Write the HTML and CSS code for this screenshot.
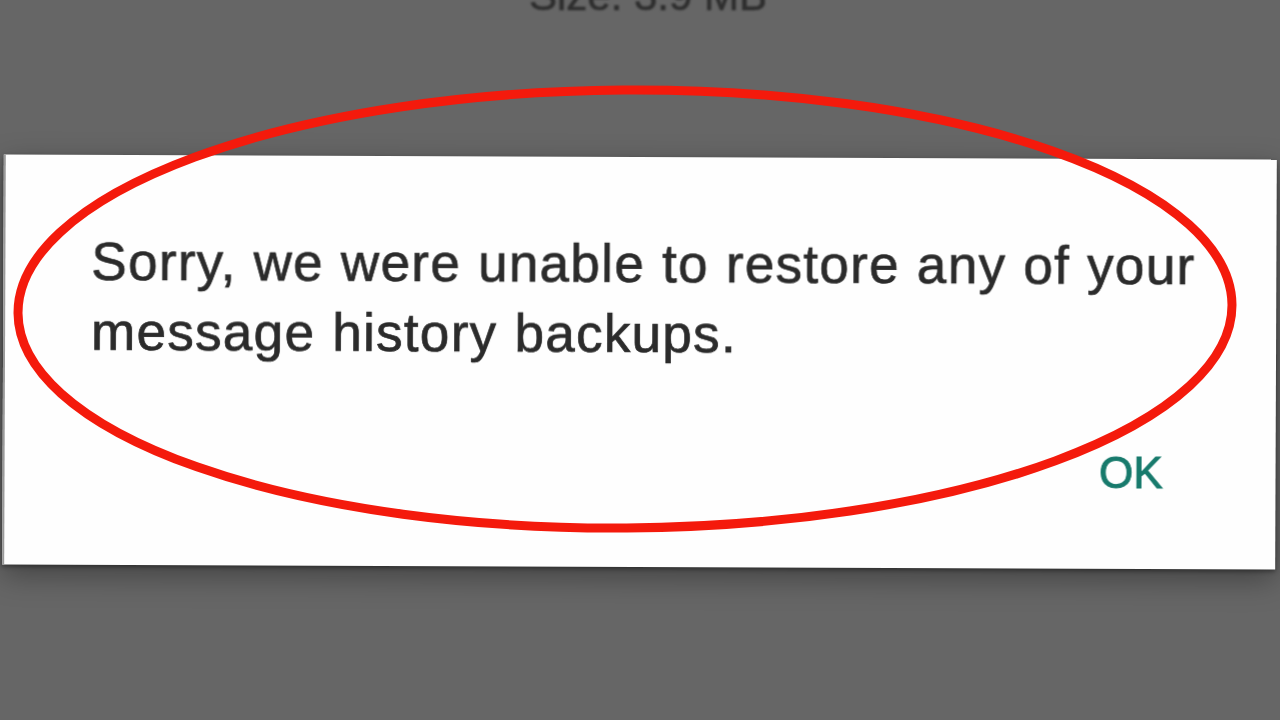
FILE: index.html
```html
<!DOCTYPE html>
<html>
<head>
<meta charset="utf-8">
<link rel="stylesheet" href="styles.css">
</head>
<body>
<div class="screen">
  <div class="size-label">Size: 3.9 MB</div>
  <div class="dialog">
    <p class="message">Sorry, we were unable to restore any of your message history backups.</p>
    <div class="actions">
      <span class="ok-btn">OK</span>
    </div>
  </div>
</div>
<svg class="annotation" width="1280" height="720" viewBox="0 0 1280 720">
  <ellipse cx="625" cy="309" rx="607" ry="219" fill="none" stroke="#f41a0c" stroke-width="9" transform="rotate(-0.4 625 309)"/>
</svg>
</body>
</html>
```
FILE: styles.css
```css
html, body {
  margin: 0;
  padding: 0;
}
body {
  width: 1280px;
  height: 720px;
  overflow: hidden;
  background: #666666;
  font-family: "Liberation Sans", Arial, sans-serif;
  position: relative;
}
.screen {
  display: flex;
  flex-direction: column;
  align-items: stretch;
}
.size-label {
  text-align: center;
  font-size: 42px;
  line-height: 40px;
  color: #2e2e2e;
  margin-top: -24px;
  padding-left: 16px;
  -webkit-text-stroke: 0.6px #2e2e2e;
  filter: blur(0.8px);
}
.dialog {
  margin-top: 141px;
  margin-left: 3px;
  width: 1273px;
  height: 410px;
  box-sizing: border-box;
  background: #fefefe;
  border-left: 2px solid #9a9a9a;
  box-shadow: 0 10px 30px rgba(0, 0, 0, 0.35), 0 2px 4px rgba(0, 0, 0, 0.4);
  transform: rotate(0.23deg);
  padding: 72px 40px 0 86px;
  display: flex;
  flex-direction: column;
}
.message {
  margin: 0;
  font-size: 53px;
  line-height: 70px;
  letter-spacing: 1.3px;
  word-spacing: 1px;
  color: #2b2b2b;
  -webkit-text-stroke: 0.7px #2b2b2b;
  filter: blur(0.6px);
}
.actions {
  display: flex;
  justify-content: flex-end;
  margin-top: 77px;
  padding-right: 73px;
}
.ok-btn {
  font-size: 44px;
  line-height: 50px;
  font-weight: 400;
  color: #177a6c;
  -webkit-text-stroke: 1px #177a6c;
  filter: blur(0.6px);
}
.annotation {
  position: absolute;
  left: 0;
  top: 0;
  pointer-events: none;
}
```
